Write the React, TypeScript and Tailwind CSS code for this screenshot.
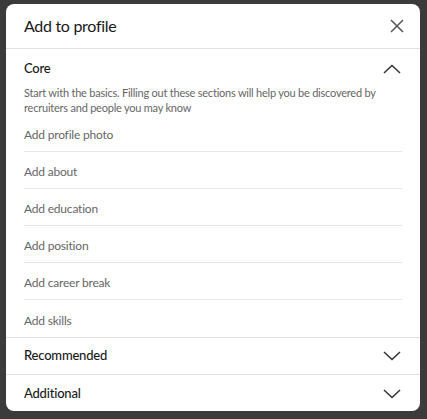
import React from "react";

const items = [
  "Add profile photo",
  "Add about",
  "Add education",
  "Add position",
  "Add career break",
  "Add skills",
];

const Chevron: React.FC<{ up?: boolean }> = ({ up }) => (
  <svg width="18" height="10" viewBox="0 0 18 10" fill="none" stroke="#333" strokeWidth="1.5">
    {up ? <path d="M1 9 L9 1.5 L17 9" /> : <path d="M1 1 L9 8.5 L17 1" />}
  </svg>
);

export default function App() {
  return (
    <div
      className="w-[427px] h-[419px] bg-[#3b3b3b] pt-[4px] pl-[6px] pr-[7px] overflow-hidden"
      style={{ fontFamily: 'Lato, "Open Sans", sans-serif' }}
    >
      <div className="bg-white rounded-lg h-[407px] overflow-hidden flex flex-col">
        <div className="h-[45px] flex items-center justify-between pl-[18px] pr-[16px] border-b border-[#e0e0e0] shrink-0">
          <span className="text-[16px] tracking-[-0.3px] text-[#191919]">Add to profile</span>
          <svg width="14" height="14" viewBox="0 0 14 14" stroke="#555" strokeWidth="1.5">
            <path d="M1 1 L13 13 M13 1 L1 13" />
          </svg>
        </div>
        <div className="px-[18px] border-b border-[#e0e0e0]">
          <div className="h-[38px] flex items-center justify-between pt-[1px]">
            <span className="text-[13px] tracking-[-0.2px] font-medium text-[#191919]">Core</span>
            <span className="pr-[1px]"><Chevron up /></span>
          </div>
          <p className="text-[11px] tracking-[-0.22px] leading-[15px] text-[#666] mt-[-2px]">
            Start with the basics. Filling out these sections will help you be discovered by recruiters and people you may know
          </p>
          <div>
            {items.map((label, i) => (
              <div
                key={label}
                className={`h-[37px] flex items-center pt-[4px] text-[12px] tracking-[-0.2px] text-[#666] ${i < items.length - 1 ? "border-b border-[#e6e6e6]" : ""}`}
              >
                {label}
              </div>
            ))}
          </div>
        </div>
        <div className="h-[37px] flex items-center justify-between px-[18px] border-b border-[#e0e0e0] shrink-0">
          <span className="text-[13px] tracking-[-0.2px] font-medium text-[#191919]">Recommended</span>
          <span className="pr-[1px]"><Chevron /></span>
        </div>
        <div className="h-[37px] flex items-center justify-between px-[18px] shrink-0">
          <span className="text-[13px] tracking-[-0.2px] font-medium text-[#191919]">Additional</span>
          <span className="pr-[1px]"><Chevron /></span>
        </div>
      </div>
    </div>
  );
}
